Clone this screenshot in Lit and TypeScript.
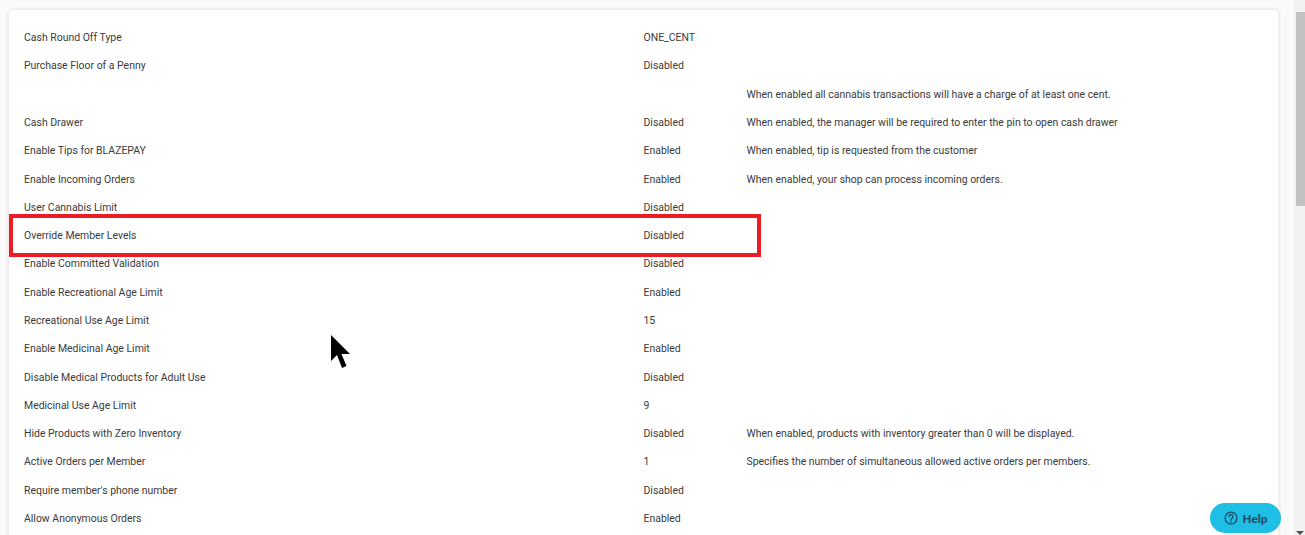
import { LitElement, html, css, svg } from "lit";
import { customElement } from "lit/decorators.js";

const rows: [string, string, string][] = [
  ["Cash Round Off Type", "ONE_CENT", ""],
  ["Purchase Floor of a Penny", "Disabled", ""],
  ["", "", "When enabled all cannabis transactions will have a charge of at least one cent."],
  ["Cash Drawer", "Disabled", "When enabled, the manager will be required to enter the pin to open cash drawer"],
  ["Enable Tips for BLAZEPAY", "Enabled", "When enabled, tip is requested from the customer"],
  ["Enable Incoming Orders", "Enabled", "When enabled, your shop can process incoming orders."],
  ["User Cannabis Limit", "Disabled", ""],
  ["Override Member Levels", "Disabled", ""],
  ["Enable Committed Validation", "Disabled", ""],
  ["Enable Recreational Age Limit", "Enabled", ""],
  ["Recreational Use Age Limit", "15", ""],
  ["Enable Medicinal Age Limit", "Enabled", ""],
  ["Disable Medical Products for Adult Use", "Disabled", ""],
  ["Medicinal Use Age Limit", "9", ""],
  ["Hide Products with Zero Inventory", "Disabled", "When enabled, products with inventory greater than 0 will be displayed."],
  ["Active Orders per Member", "1", "Specifies the number of simultaneous allowed active orders per members."],
  ["Require member's phone number", "Disabled", ""],
  ["Allow Anonymous Orders", "Enabled", ""],
];

@customElement("app-root")
export class AppRoot extends LitElement {
  static styles = css`
    :host {
      display: block;
      position: relative;
      width: 1305px;
      height: 535px;
      overflow: hidden;
      background: #fafafa;
      font-family: Roboto, "Liberation Sans", sans-serif;
      font-size: 10.46px;
      color: #3a3a3a;
    }
    .page { display: flex; height: 100%; }
    .main { flex: 1; padding: 10px 16px 0 9px; min-width: 0; }
    .card {
      background: #fff;
      border-radius: 3px;
      box-shadow: 0 0 4px rgba(0, 0, 0, 0.14);
      padding: 13.4px 15px 0;
      height: 600px;
    }
    .row {
      display: grid;
      grid-template-columns: 619.5px 103px 1fr;
      height: 28.3px;
      align-items: center;
      white-space: nowrap;
    }
    .scrollbar {
      width: 11px;
      background: #f1f1f1;
      display: flex;
      flex-direction: column;
      align-items: stretch;
      padding: 12px 0 0 2px;
      box-sizing: border-box;
    }
    .thumb { height: 194px; background: #c1c1c1; }
    .arrow {
      position: absolute;
      right: 1px;
      bottom: 0;
      width: 0;
      height: 0;
      border-left: 4px solid transparent;
      border-right: 4px solid transparent;
      border-top: 4px solid #505050;
    }
    .highlight {
      position: absolute;
      left: 9px;
      top: 214px;
      width: 752px;
      height: 43px;
      box-sizing: border-box;
      border: 4px solid #ed1c24;
    }
    .cursor { position: absolute; left: 330px; top: 334px; }
    .help {
      position: absolute;
      left: 1210px;
      top: 503px;
      width: 71px;
      height: 30px;
      border-radius: 15px;
      background: #1fbfe5;
      color: #1f4a66;
      display: flex;
      align-items: center;
      justify-content: center;
      gap: 5px;
      font-size: 11.5px;
      font-weight: 900;
      font-family: Lato, Roboto, sans-serif;
      letter-spacing: 0.1px;
    }
  `;

  render() {
    return html`
      <div class="page">
        <div class="main">
          <div class="card">
            ${rows.map(
              ([a, b, c]) => html`<div class="row"><span>${a}</span><span>${b}</span><span>${c}</span></div>`
            )}
          </div>
        </div>
        <div class="scrollbar"><div class="thumb"></div></div>
      </div>
      <div class="arrow"></div>
      <div class="highlight"></div>
      <svg class="cursor" width="22" height="36" viewBox="0 0 22 36">
        ${svg`<path d="M1 1 L1 27 L7 21 L12 34 L16.5 32 L11.5 20 L20 20 Z" fill="#000"/>`}
      </svg>
      <div class="help">
        <svg width="14" height="14" viewBox="0 0 14 14" fill="none" stroke="#1f4a66" stroke-width="1.3">
          ${svg`<circle cx="7" cy="7" r="5.9"/>
          <path d="M5.1 5.6a1.95 1.95 0 1 1 3 1.6c-.7.45-1.1.8-1.1 1.5" stroke-linecap="round"/>
          <circle cx="7" cy="10.4" r=".8" fill="#1f4a66" stroke="none"/>`}
        </svg>
        <span>Help</span>
      </div>
    `;
  }
}
